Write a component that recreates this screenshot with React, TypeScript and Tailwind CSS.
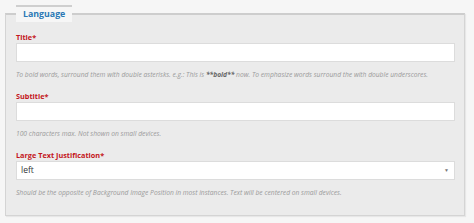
import React from "react";

const font = { fontFamily: '"Open Sans", "Liberation Sans", sans-serif' };

function Label({ children }: { children: React.ReactNode }) {
  return (
    <div className="text-[7.3px] font-bold leading-[10px] text-[#c4161c]">{children}</div>
  );
}

function Help({ children }: { children: React.ReactNode }) {
  return (
    <div className="mt-[8px] text-[6.7px] italic leading-[9px] text-[#9a9a9a]">{children}</div>
  );
}

export default function App() {
  return (
    <div className="h-[223px] w-[474px] bg-[#f6f6f6] pl-[5px] pr-[9px] pt-[5px]" style={font}>
      <fieldset className="m-0 h-[211px] border border-[#d4d4d4] border-t-2 border-t-[#cdcdcd] bg-[#ebebeb] pl-[10px] pr-[9px] pb-0 pt-0 shadow-[1px_1px_1px_rgba(0,0,0,0.06)]">
        <legend className="ml-0 border-t-2 border-[#cfcfcf] bg-[#f6f6f6] px-[7px] pb-[2px] pt-[1px] text-[8.8px] font-bold leading-[12px] text-[#2b79b5]">
          Language
        </legend>
        <div className="pt-[10px]">
          <Label>Title*</Label>
          <div className="mt-[1px] h-[19px] w-full border border-[#dcdcdc] bg-white" />
          <Help>
            To bold words, surround them with double asterisks. e.g.: This is{" "}
            <span className="font-bold text-[#666]">**bold**</span> now. To emphasize words surround the with double underscores.
          </Help>
        </div>
        <div className="mt-[12px]">
          <Label>Subtitle*</Label>
          <div className="mt-[1px] h-[19px] w-full border border-[#dcdcdc] bg-white" />
          <Help>100 characters max. Not shown on small devices.</Help>
        </div>
        <div className="mt-[12px]">
          <Label>Large Text Justification*</Label>
          <div className="mt-[1px] flex h-[19px] w-full items-center justify-between border border-[#dcdcdc] bg-white pl-[4px] pr-[5px]">
            <span className="text-[8.5px] text-[#333]">left</span>
            <span className="text-[5px] text-[#777]">▼</span>
          </div>
          <Help>
            Should be the opposite of Background Image Position in most instances. Text will be centered on small devices.
          </Help>
        </div>
      </fieldset>
    </div>
  );
}
